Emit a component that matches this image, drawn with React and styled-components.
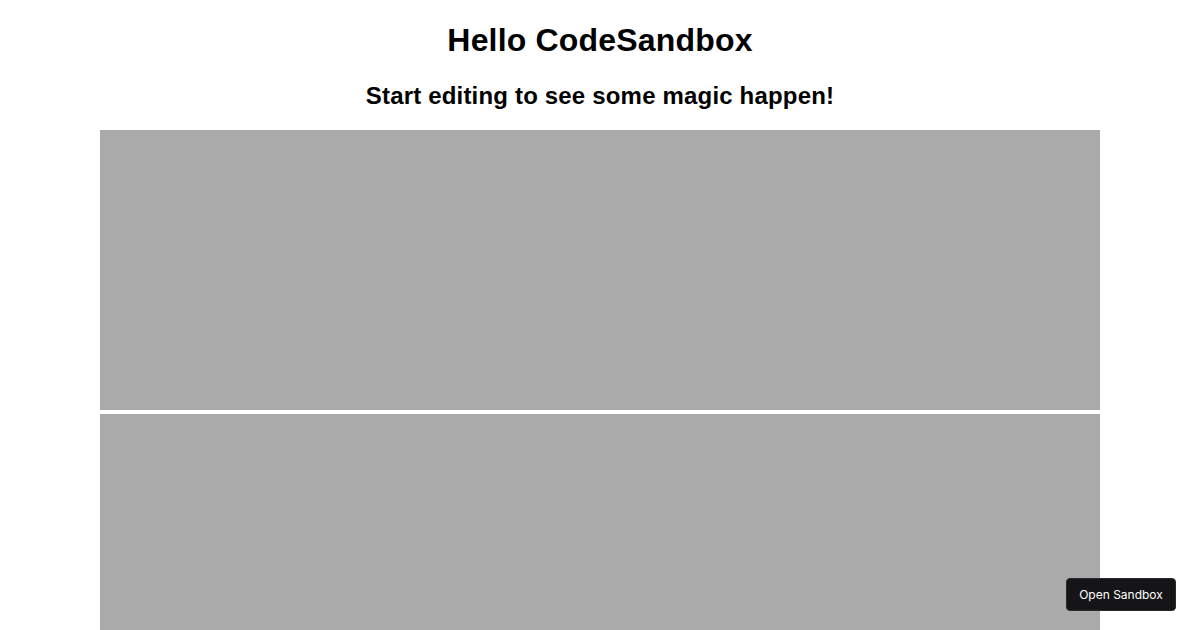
import React from "react";
import styled, { createGlobalStyle } from "styled-components";

const Global = createGlobalStyle`
  html, body { background: #fff; }
  body {
    margin: 8px;
    font-family: "Liberation Sans", Arial, sans-serif;
    color: #000;
  }
  ::-webkit-scrollbar { display: none; }
`;

const Page = styled.div`
  text-align: center;
`;

const Title = styled.h1`
  font-size: 32px;
  font-weight: 700;
  letter-spacing: 0.18px;
  margin: 13.5px 0 23.44px;
`;

const Subtitle = styled.h2`
  font-size: 24px;
  font-weight: 700;
  letter-spacing: 0.18px;
  margin: 0 0 20px;
`;

const Stack = styled.div`
  display: flex;
  flex-direction: column;
  align-items: center;
  gap: 4px;
`;

const Panel = styled.div`
  width: 1000px;
  height: 280.5px;
  background: #aaaaaa;
`;

const OpenButton = styled.button`
  position: fixed;
  right: 24px;
  bottom: 19px;
  width: 110px;
  height: 33px;
  border: 1px solid #2a2a2c;
  border-radius: 4px;
  background: #151517;
  color: #fff;
  font-family: Inter, "Liberation Sans", sans-serif;
  font-size: 12px;
  padding: 0;
  cursor: pointer;
`;

export default function App() {
  return (
    <>
      <Global />
      <Page>
        <Title>Hello CodeSandbox</Title>
        <Subtitle>Start editing to see some magic happen!</Subtitle>
        <Stack>
          <Panel />
          <Panel />
        </Stack>
      </Page>
      <OpenButton>Open Sandbox</OpenButton>
    </>
  );
}
